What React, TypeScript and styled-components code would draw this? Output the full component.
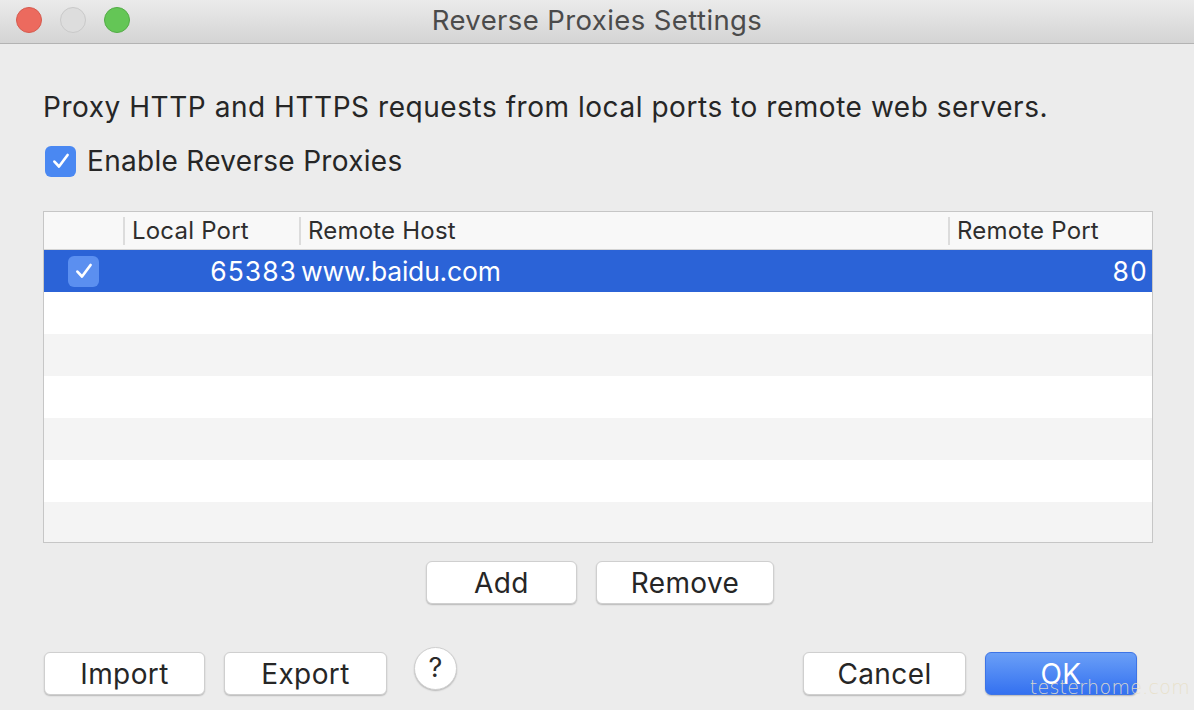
import React from "react";
import styled, { createGlobalStyle } from "styled-components";

const Global = createGlobalStyle`
  html, body { margin: 0; padding: 0; background: #ececec; }
  body { font-family: Inter, "Noto Sans", "Liberation Sans", sans-serif; -webkit-font-smoothing: antialiased; }
`;

const Window = styled.div`
  position: relative;
  width: 1194px;
  height: 710px;
  background: #ececec;
  display: flex;
  flex-direction: column;
  overflow: hidden;
`;

const TitleBar = styled.div`
  height: 43px;
  flex: none;
  background: linear-gradient(#ebebeb, #d4d4d4);
  border-bottom: 1px solid #b3b3b3;
  display: flex;
  align-items: center;
`;

const Lights = styled.div`
  display: flex;
  gap: 18px;
  padding-left: 16px;
  margin-top: -4px;
`;

const Light = styled.span<{ $c: string; $b: string }>`
  width: 26px;
  height: 26px;
  border-radius: 50%;
  background: ${(p) => p.$c};
  border: 1px solid ${(p) => p.$b};
  box-sizing: border-box;
`;

const Title = styled.div`
  flex: 1;
  text-align: center;
  margin-left: -130px;
  margin-top: -3px;
  font-size: 27.5px;
  color: #4b4b4b;
  letter-spacing: 0.4px;
`;

const Content = styled.div`
  flex: 1;
  display: flex;
  flex-direction: column;
  padding: 47px 41px 0 43px;
`;

const Desc = styled.div`
  font-size: 28px;
  line-height: 32px;
  color: #262626;
  letter-spacing: 0.54px;
  white-space: nowrap;
`;

const CheckRow = styled.label`
  display: flex;
  align-items: center;
  gap: 11px;
  margin-top: 22px;
  margin-left: 2px;
  font-size: 28px;
  line-height: 32px;
  color: #262626;
  letter-spacing: 0.3px;
`;

const Box = styled.span<{ $size: number; $bg: string }>`
  width: ${(p) => p.$size}px;
  height: ${(p) => p.$size}px;
  border-radius: 6px;
  background: ${(p) => p.$bg};
  display: flex;
  align-items: center;
  justify-content: center;
  flex: none;
`;

const Table = styled.div`
  margin-top: 34px;
  height: 332px;
  box-sizing: border-box;
  border: 1px solid #c6c6c6;
  background: #f4f4f4;
  overflow: hidden;
  display: flex;
  flex-direction: column;
`;

const cols = "79px 176px 649px 1fr";

const Header = styled.div`
  display: grid;
  grid-template-columns: ${cols};
  height: 37px;
  flex: none;
  border-bottom: 1px solid #d4d4d4;
  background: #f8f8f8;
`;

const HeadCell = styled.div<{ $sep?: boolean }>`
  display: flex;
  align-items: center;
  padding-left: 9px;
  font-size: 24px;
  letter-spacing: 0.2px;
  color: #2e2e2e;
  background-image: ${(p) =>
    p.$sep ? "linear-gradient(#dcdcdc, #dcdcdc)" : "none"};
  background-size: 2px 28px;
  background-repeat: no-repeat;
  background-position: left center;
`;

const Row = styled.div<{ $bg: string; $fg?: string }>`
  display: grid;
  grid-template-columns: ${cols};
  height: 42px;
  flex: none;
  background: ${(p) => p.$bg};
  color: ${(p) => p.$fg || "#222"};
  font-size: 26.5px;
`;

const Cell = styled.div<{ $align?: "left" | "right" | "center"; $pl?: number; $pr?: number; $ls?: number }>`
  display: flex;
  align-items: center;
  justify-content: ${(p) =>
    p.$align === "right" ? "flex-end" : p.$align === "center" ? "center" : "flex-start"};
  padding-left: ${(p) => p.$pl ?? 0}px;
  padding-right: ${(p) => p.$pr ?? 0}px;
  letter-spacing: ${(p) => p.$ls ?? 0}px;
  white-space: nowrap;
`;

const MidButtons = styled.div`
  display: flex;
  justify-content: center;
  gap: 19px;
  margin-top: 18px;
  padding-left: 4px;
`;

const Btn = styled.button<{ $w: number; $primary?: boolean }>`
  width: ${(p) => p.$w}px;
  height: 43px;
  border-radius: 6px;
  font-family: inherit;
  font-size: 28px;
  letter-spacing: 0.4px;
  color: ${(p) => (p.$primary ? "#fff" : "#262626")};
  background: ${(p) =>
    p.$primary ? "linear-gradient(#6a9ff7, #3471f0)" : "#ffffff"};
  border: 1px solid ${(p) => (p.$primary ? "#3d74e6" : "#cfcfcf")};
  box-shadow: 0 1px 1.5px rgba(0, 0, 0, 0.22);
  padding: 0;
  flex: none;
  display: flex;
  align-items: center;
  justify-content: center;
`;

const BottomBar = styled.div`
  display: flex;
  align-items: center;
  margin-top: 48px;
  margin-left: 1px;
  margin-right: 16px;
`;

const Group = styled.div`
  display: flex;
  align-items: center;
  gap: 19px;
`;

const Help = styled.button`
  width: 43px;
  height: 43px;
  border-radius: 50%;
  background: #fff;
  border: 1px solid #cfcfcf;
  box-shadow: 0 1px 1.5px rgba(0, 0, 0, 0.22);
  font-family: inherit;
  font-size: 27px;
  color: #2a2a2a;
  padding: 0 0 3px 0;
  margin-left: 8px;
  margin-top: -10px;
`;

const Spacer = styled.div`
  flex: 1;
`;

const Watermark = styled.div`
  position: absolute;
  right: 4px;
  bottom: 12px;
  font-family: "DejaVu Sans", sans-serif;
  font-weight: 200;
  font-size: 19px;
  letter-spacing: 0.3px;
  color: rgba(232, 224, 200, 0.9);
  pointer-events: none;
`;

const Check = ({ size = 20 }: { size?: number }) => (
  <svg width={size} height={size} viewBox="0 0 20 20" fill="none">
    <path d="M4 10.5 L8.2 15 L16 4.5" stroke="#fff" strokeWidth="2.4" strokeLinecap="round" strokeLinejoin="round" />
  </svg>
);

export default function App() {
  const stripes = ["#ffffff", "#f4f4f4", "#ffffff", "#f4f4f4", "#ffffff", "#f4f4f4"];
  return (
    <>
      <Global />
      <Window>
        <TitleBar>
          <Lights>
            <Light $c="#ec6a5e" $b="#d65a4e" />
            <Light $c="#dddddd" $b="#c9c9c9" />
            <Light $c="#64c656" $b="#52ac45" />
          </Lights>
          <Title>Reverse Proxies Settings</Title>
        </TitleBar>
        <Content>
          <Desc>Proxy HTTP and HTTPS requests from local ports to remote web servers.</Desc>
          <CheckRow>
            <Box $size={31} $bg="#4a88f2">
              <Check size={22} />
            </Box>
            Enable Reverse Proxies
          </CheckRow>
          <Table>
            <Header>
              <HeadCell />
              <HeadCell $sep>Local Port</HeadCell>
              <HeadCell $sep>Remote Host</HeadCell>
              <HeadCell $sep>Remote Port</HeadCell>
            </Header>
            <Row $bg="#2b63d7" $fg="#ffffff">
              <Cell $align="center">
                <Box $size={31} $bg="#5b8ff0">
                  <Check size={22} />
                </Box>
              </Cell>
              <Cell $align="right" $pr={2} $ls={1.0}>65383</Cell>
              <Cell $pl={2} $ls={-0.2}>www.baidu.com</Cell>
              <Cell $align="right" $pr={4} $ls={1.2}>80</Cell>
            </Row>
            {stripes.map((c, i) => (
              <Row key={i} $bg={c}>
                <Cell />
                <Cell />
                <Cell />
                <Cell />
              </Row>
            ))}
          </Table>
          <MidButtons>
            <Btn $w={151}>Add</Btn>
            <Btn $w={178}>Remove</Btn>
          </MidButtons>
          <BottomBar>
            <Group>
              <Btn $w={161}>Import</Btn>
              <Btn $w={163}>Export</Btn>
              <Help>?</Help>
            </Group>
            <Spacer />
            <Group>
              <Btn $w={163}>Cancel</Btn>
              <Btn $w={152} $primary>OK</Btn>
            </Group>
          </BottomBar>
        </Content>
        <Watermark>testerhome.com</Watermark>
      </Window>
    </>
  );
}
